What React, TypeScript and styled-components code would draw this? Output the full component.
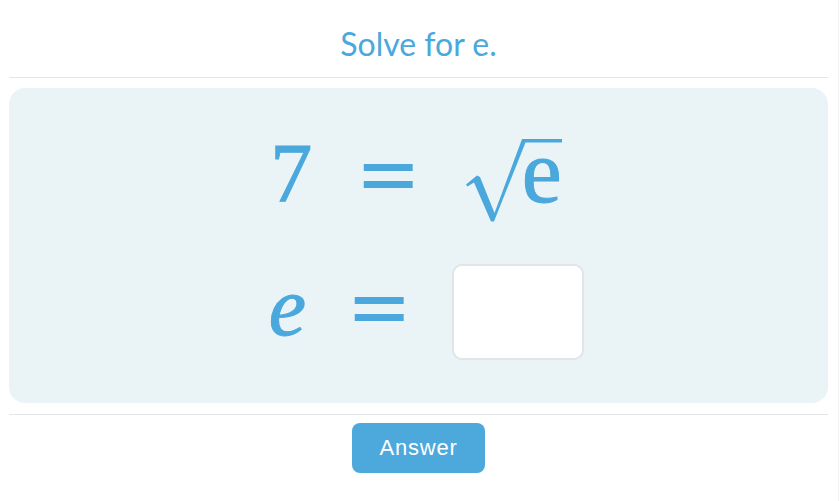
import React from "react";
import styled, { createGlobalStyle } from "styled-components";

const GlobalStyle = createGlobalStyle`
  html, body {
    margin: 0;
    padding: 0;
    background: #ffffff;
  }
  body {
    font-family: "Lato", "Liberation Sans", sans-serif;
  }
`;

const Page = styled.div`
  width: 839px;
  height: 501px;
  border-right: 1px solid #f1f1f1;
  padding: 0 10px 0 9px;
  box-sizing: border-box;
  display: flex;
  flex-direction: column;
  align-items: stretch;
`;

const Header = styled.header`
  padding: 25px 0 0;
  height: 77px;
  box-sizing: border-box;
  display: flex;
  justify-content: center;
`;

const Title = styled.h1`
  margin: 0;
  font-family: "Lato", sans-serif;
  font-weight: 400;
  font-size: 32px;
  line-height: 1.2;
  color: #4aa8dc;
`;

const Divider = styled.hr<{ $top?: number }>`
  margin: ${(p) => p.$top ?? 0}px 0 0;
  border: 0;
  height: 1px;
  background: #e3e5e6;
`;

const Panel = styled.section`
  margin-top: 10px;
  height: 315px;
  box-sizing: border-box;
  background: #eaf4f7;
  border-radius: 16px;
  padding-top: 43px;
  display: flex;
  flex-direction: column;
  align-items: center;
  gap: 48px;
`;

const Row = styled.div<{ $gap: number; $offset?: number }>`
  display: flex;
  align-items: baseline;
  gap: ${(p) => p.$gap}px;
  margin-left: ${(p) => p.$offset ?? 0}px;
  color: #4aa8dc;
  font-family: "Liberation Serif", "Times New Roman", serif;
  font-size: 84px;
  line-height: 84px;
`;

const Glyph = styled.span<{ $italic?: boolean }>`
  display: inline-block;
  font-style: ${(p) => (p.$italic ? "italic" : "normal")};
  -webkit-text-stroke: 1px #4aa8dc;
`;

const RadicandGlyph = styled.span`
  display: inline-block;
  font-size: 90px;
  line-height: 80px;
  -webkit-text-stroke: 1px #4aa8dc;
`;

const Equals = styled.span`
  display: inline-block;
  font-family: "DejaVu Sans", sans-serif;
  font-size: 84px;
  line-height: 84px;
  transform: scaleX(0.93);
`;

const Sqrt = styled.span`
  position: relative;
  display: inline-flex;
  padding-left: 57px;
`;

const Radical = styled.svg`
  position: absolute;
  left: 0;
  top: 0;
  overflow: visible;
`;

const AnswerBox = styled.input`
  align-self: center;
  width: 132px;
  height: 96px;
  box-sizing: border-box;
  border: 2px solid #dfe5e9;
  border-radius: 10px;
  background: #ffffff;
  outline: none;
  font-size: 28px;
  text-align: center;
  color: #4aa8dc;
`;

const Footer = styled.div`
  display: flex;
  justify-content: center;
  padding-top: 8px;
`;

const AnswerButton = styled.button`
  width: 133px;
  height: 50px;
  border: 0;
  border-radius: 8px;
  background: #4da8dc;
  color: #ffffff;
  font-family: "Liberation Sans", Arial, sans-serif;
  font-size: 22px;
  letter-spacing: 0.8px;
  cursor: pointer;
`;

export default function App() {
  return (
    <>
      <GlobalStyle />
      <Page>
        <Header>
          <Title>Solve for e.</Title>
        </Header>
        <Divider />
        <Panel>
          <Row $gap={41} $offset={-5}>
            <Glyph>7</Glyph>
            <Equals>=</Equals>
            <Sqrt>
              <Radical width="97" height="90" viewBox="0 0 97 90" aria-hidden="true">
                <path
                  d="M1 52.5 L12 43.5 L15 45 L29.5 81 L57 7 L97 7 L97 10.5 L60.5 10.5 L29 89.5 L26 89.5 L9 50.5 L2.5 54.5 Z"
                  fill="#4aa8dc"
                />
              </Radical>
              <RadicandGlyph>e</RadicandGlyph>
            </Sqrt>
          </Row>
          <Row $gap={38} $offset={16}>
            <Glyph $italic>e</Glyph>
            <Equals>=</Equals>
            <AnswerBox type="text" aria-label="e" />
          </Row>
        </Panel>
        <Divider $top={11} />
        <Footer>
          <AnswerButton type="button">Answer</AnswerButton>
        </Footer>
      </Page>
    </>
  );
}
